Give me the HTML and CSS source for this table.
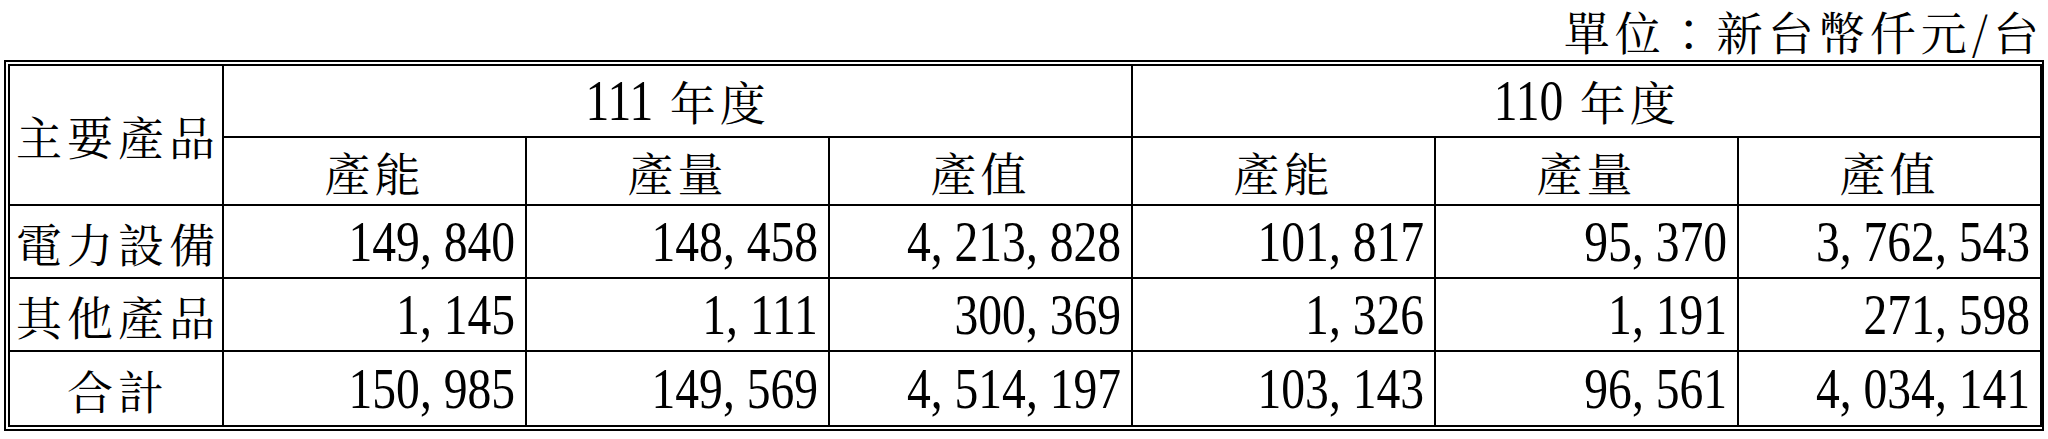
FILE: index.html
```html
<!DOCTYPE html>
<html lang="zh-Hant">
<head>
<meta charset="utf-8">
<title>主要產品產能產量產值</title>
<link rel="stylesheet" href="styles.css">
</head>
<body>
<div class="page">
  <div class="unit"><span class="unit-text">單位：新台幣仟元/台</span></div>
  <div class="frame">
    <table class="grid">
      <colgroup>
        <col class="c-label">
        <col class="c-data"><col class="c-data"><col class="c-data">
        <col class="c-data"><col class="c-data"><col class="c-data">
      </colgroup>
      <thead>
        <tr class="r-year">
          <th rowspan="2" class="label">主要產品</th>
          <th colspan="3" class="year"><span class="num">111</span> 年度</th>
          <th colspan="3" class="year"><span class="num">110</span> 年度</th>
        </tr>
        <tr class="r-sub">
          <th>產能</th><th>產量</th><th>產值</th>
          <th>產能</th><th>產量</th><th>產值</th>
        </tr>
      </thead>
      <tbody>
        <tr class="r-data">
          <td class="label">電力設備</td>
          <td class="val"><span class="num">149, 840</span></td>
          <td class="val"><span class="num">148, 458</span></td>
          <td class="val"><span class="num">4, 213, 828</span></td>
          <td class="val"><span class="num">101, 817</span></td>
          <td class="val"><span class="num">95, 370</span></td>
          <td class="val"><span class="num">3, 762, 543</span></td>
        </tr>
        <tr class="r-data">
          <td class="label">其他產品</td>
          <td class="val"><span class="num">1, 145</span></td>
          <td class="val"><span class="num">1, 111</span></td>
          <td class="val"><span class="num">300, 369</span></td>
          <td class="val"><span class="num">1, 326</span></td>
          <td class="val"><span class="num">1, 191</span></td>
          <td class="val"><span class="num">271, 598</span></td>
        </tr>
        <tr class="r-data r-last">
          <td class="label">合計</td>
          <td class="val"><span class="num">150, 985</span></td>
          <td class="val"><span class="num">149, 569</span></td>
          <td class="val"><span class="num">4, 514, 197</span></td>
          <td class="val"><span class="num">103, 143</span></td>
          <td class="val"><span class="num">96, 561</span></td>
          <td class="val"><span class="num">4, 034, 141</span></td>
        </tr>
      </tbody>
    </table>
  </div>
</div>
</body>
</html>
```

FILE: styles.css
```css
html, body {
  margin: 0;
  padding: 0;
  background: #fff;
}

body {
  color: #000;
  font-family: "DFKai-SB", "BiauKai", "AR PL UKai TW", "AR PL UKai TW MBE", "Noto Serif CJK TC", "Noto Sans CJK TC", serif;
}

.page {
  width: 2048px;
  display: flex;
  flex-direction: column;
}

.unit {
  display: flex;
  justify-content: flex-end;
  align-items: center;
  height: 60px;
  padding-right: 4px;
}

.unit-text {
  font-size: 46px;
  line-height: 58px;
  letter-spacing: 5px;
  white-space: nowrap;
}

.frame {
  margin-left: 4px;
  width: 2040px;
  box-sizing: border-box;
  border: 2px solid #000;
  padding: 2px;
}

.grid {
  width: 2032px;
  table-layout: fixed;
  border-collapse: collapse;
  border: 2px solid #000;
}

.c-label { width: 214px; }
.c-data { width: 303px; }

.grid th,
.grid td {
  border: 2px solid #000;
  padding: 0;
  font-weight: normal;
  font-size: 46px;
  line-height: 1;
  letter-spacing: 4px;
  text-align: center;
  vertical-align: middle;
  white-space: nowrap;
}

.r-year th { height: 70px; }
.r-sub th { height: 66px; }
.r-data td { height: 71px; }
.r-last td { height: 73px; }

.grid .label {
  text-align: center;
  letter-spacing: 5px;
  padding-left: 4px;
}

.grid .val {
  text-align: right;
  padding-right: 10px;
}

.num {
  display: inline-block;
  font-family: "Liberation Serif", "Times New Roman", serif;
  font-size: 58px;
  line-height: 1;
  letter-spacing: 0;
  white-space: pre;
  transform: scaleX(0.82);
  transform-origin: right center;
}

.year .num {
  transform-origin: center center;
  margin: 0 -7px;
}
```
